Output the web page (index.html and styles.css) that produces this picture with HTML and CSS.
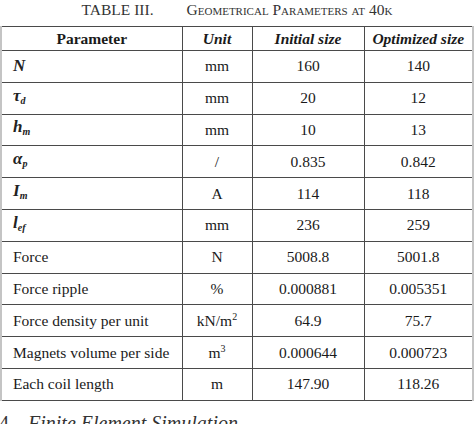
FILE: index.html
```html
<!DOCTYPE html>
<html>
<head>
<meta charset="utf-8">
<link rel="stylesheet" href="styles.css">
</head>
<body>
<div class="page">
  <div class="caption"><span class="label">TABLE III.</span><span class="name">Geometrical Parameters at 40k</span></div>
  <table class="params">
    <colgroup>
      <col class="c1"><col class="c2"><col class="c3"><col class="c4">
    </colgroup>
    <thead>
      <tr>
        <th class="left-h">Parameter</th>
        <th class="it">Unit</th>
        <th class="it">Initial size</th>
        <th class="it">Optimized size</th>
      </tr>
    </thead>
    <tbody>
      <tr><td class="sym"><i>N</i></td><td>mm</td><td>160</td><td>140</td></tr>
      <tr><td class="sym"><i>τ<sub>d</sub></i></td><td>mm</td><td>20</td><td>12</td></tr>
      <tr><td class="sym"><i>h<sub>m</sub></i></td><td>mm</td><td>10</td><td>13</td></tr>
      <tr><td class="sym"><i>α<sub>p</sub></i></td><td>/</td><td>0.835</td><td>0.842</td></tr>
      <tr><td class="sym"><i>I<sub>m</sub></i></td><td>A</td><td>114</td><td>118</td></tr>
      <tr><td class="sym"><i>l<sub>ef</sub></i></td><td>mm</td><td>236</td><td>259</td></tr>
      <tr><td class="name-c">Force</td><td>N</td><td>5008.8</td><td>5001.8</td></tr>
      <tr><td class="name-c">Force ripple</td><td>%</td><td>0.000881</td><td>0.005351</td></tr>
      <tr><td class="name-c">Force density per unit</td><td>kN/m<sup>2</sup></td><td>64.9</td><td>75.7</td></tr>
      <tr><td class="name-c">Magnets volume per side</td><td>m<sup>3</sup></td><td>0.000644</td><td>0.000723</td></tr>
      <tr><td class="name-c">Each coil length</td><td>m</td><td>147.90</td><td>118.26</td></tr>
    </tbody>
  </table>
  <div class="section"><span class="num">4.</span><i>Finite Element Simulation</i></div>
</div>
</body>
</html>
```
FILE: styles.css
```css
html, body {
  margin: 0;
  padding: 0;
  background: #ffffff;
}
.page {
  width: 474px;
  height: 424px;
  overflow: hidden;
  font-family: "Liberation Serif", "Times New Roman", serif;
  color: #1a1a1a;
}
.caption {
  height: 26px;
  display: flex;
  justify-content: center;
  align-items: flex-start;
  gap: 33px;
  font-size: 15.5px;
  line-height: 20px;
  color: #333;
}
.caption .name {
  font-variant: small-caps;
}
.params {
  width: 472px;
  table-layout: fixed;
  border-collapse: collapse;
  font-family: "Liberation Serif", "Times New Roman", serif;
  font-size: 15.5px;
  color: #1a1a1a;
}
.params col.c1 { width: 181px; }
.params col.c2 { width: 70px; }
.params col.c3 { width: 112px; }
.params col.c4 { width: 109px; }
.params th,
.params td {
  font-family: "Liberation Serif", "Times New Roman", serif;
  border: 1px solid #4a4a4a;
  text-align: center;
  padding: 0;
  white-space: nowrap;
}
.params tr > :first-child {
  border-left: 2px solid #c4c4c4;
}
.params tr > :last-child {
  border-right: 2px solid #c4c4c4;
}
.params thead th {
  height: 23px;
  font-weight: bold;
  font-size: 15.5px;
  line-height: 18px;
}
.params th.it {
  font-style: italic;
}
.params tbody td {
  height: 30.8px;
  line-height: 18px;
  font-size: 15.5px;
}
.params td.sym,
.params td.name-c {
  text-align: left;
  padding-left: 11px;
}
.params td.sym i {
  font-family: "Liberation Serif", "DejaVu Serif", serif;
  font-size: 17px;
  font-weight: bold;
  color: #222;
}
.params td.sym sub {
  font-size: 10px;
  vertical-align: -3px;
}
.params sup {
  font-size: 10px;
  vertical-align: 6px;
  line-height: 0;
}
.section {
  margin-top: 10px;
  margin-left: -1px;
  font-family: "Liberation Serif", "Times New Roman", serif;
  font-size: 20px;
  line-height: 24px;
  color: #333;
  display: flex;
  gap: 14px;
}
```
